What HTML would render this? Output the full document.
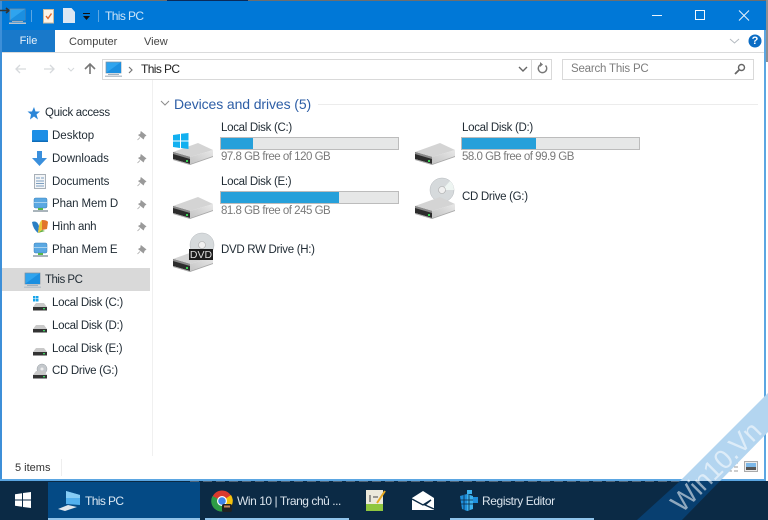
<!DOCTYPE html>
<html><head><meta charset="utf-8">
<style>
html,body{margin:0;padding:0;background:#fff}
#r{position:relative;width:768px;height:520px;overflow:hidden;background:#fff;font-family:"Liberation Sans",sans-serif;font-size:12px;color:#222}
.a{position:absolute;white-space:nowrap}
.t{position:absolute;white-space:nowrap;font-size:11.5px;letter-spacing:-.3px;line-height:14px;color:#1f2a33}
.g{color:#7a7a7a;letter-spacing:-.5px}
.bar{position:absolute;width:177px;height:11px;background:#e6e7e7;border:1px solid #bcbcbc;box-sizing:content-box}
.bar i{display:block;height:11px;background:#26a0da}
svg{position:absolute;overflow:visible}
</style></head><body><div id="r">
<svg width="0" height="0"><defs>
<linearGradient id="rs" x1="0" y1="1" x2="1" y2="0"><stop offset="0" stop-color="#c4c4c4"/><stop offset="1" stop-color="#e8e8e8"/></linearGradient>
<g id="hdd"><path d="M1 10 L26 1 L41 8 L18 15 Z" fill="#d4d4d4"/><path d="M1 10 L18 15 L18 22 L1 17 Z" fill="#2c2c2c"/><path d="M1 10 L18 15 L18 17 L1 12 Z" fill="#8a8a8a"/><path d="M18 15 L41 8 L41 14 L18 22 Z" fill="url(#rs)"/><path d="M1 17 L18 22 L41 14 V15 L18 23 L1 18 Z" fill="#a8a8a8"/><rect x="14" y="18" width="2" height="2" fill="#39d353"/></g>
<g id="shdd"><path d="M1 6 L4 2 H12 L15 6 Z" fill="#c9c9c9"/><rect x="1" y="6" width="14" height="3.5" fill="#333"/><rect x="11" y="7" width="2" height="1.3" fill="#3fd060"/></g>
<g id="pc"><rect x="1" y="1" width="15" height="11" fill="#2fa4ee" stroke="#7f8f9f" stroke-width=".7"/><path d="M1 12 L16 1 V12Z" fill="#1b8fe0"/><rect x="3" y="13" width="11" height="1" fill="#9fb0bf"/><rect x="0" y="14.5" width="17" height="1.5" fill="#b9c3cc"/></g>
<g id="nd"><rect x="1" y="1" width="13" height="10" rx="1.5" fill="#5aa8e2" stroke="#3d80b8" stroke-width=".5"/><rect x="1" y="5" width="13" height="1" fill="#a8d2f0"/><rect x="5" y="11" width="5" height="2" fill="#58b848"/><rect x="0" y="13" width="15" height="2" fill="#a9b4bb"/></g>
<g id="pin"><path d="M4 0.5 L9 4.5 L7.5 5.5 L6.5 8 L1.5 4 L3.5 3 Z M3 6.5 L0.5 9" fill="#9a9a9a" stroke="#9a9a9a" stroke-width=".6"/></g>
</defs></svg>

<!-- title bar -->
<div class="a" style="left:0;top:0;width:768px;height:1px;background:#6e6e6e"></div>
<div class="a" style="left:167px;top:0;width:81px;height:1px;background:#0a2a5a"></div>
<div class="a" style="left:0;top:1px;width:766px;height:29px;background:#0078d7"></div>
<div class="a" style="left:766px;top:0;width:2px;height:482px;background:#fff"></div>
<div class="a" style="left:766px;top:0;width:2px;height:62px;background:#8a8f94"></div>
<div class="a" style="left:0;top:1px;width:2px;height:480px;background:#3d8fd8"></div>
<div class="a" style="left:764px;top:30px;width:2px;height:451px;background:#5ba6e2"></div>
<svg style="left:0;top:5px" width="12" height="12"><path d="M0 5.5 H8 M6 3 L9 5.5 L6 8" stroke="#333" stroke-width="1.6" fill="none"/></svg>
<svg style="left:9px;top:8px" width="17" height="16"><use href="#pc"/></svg>
<div class="a" style="left:31px;top:10px;width:1px;height:12px;background:#5da7e2"></div>
<svg style="left:43px;top:9px" width="12" height="15"><rect x=".5" y=".5" width="10" height="13.5" fill="#fbf3e6" stroke="#cdbb9f"/><path d="M3 7 L5 9.5 L8.5 4.5" stroke="#e2672a" stroke-width="1.4" fill="none"/></svg>
<svg style="left:63px;top:8px" width="13" height="16"><path d="M0 0 H8.5 L12 4 V15 H0Z" fill="#dce7f3"/></svg>
<svg style="left:82px;top:13px" width="9" height="8"><rect x="1" y="0" width="7" height="1" fill="#111"/><path d="M1 3 H8 L4.5 7Z" fill="#111"/></svg>
<div class="a" style="left:98px;top:10px;width:1px;height:12px;background:#5da7e2"></div>
<div class="a" style="left:105px;top:9px;font-size:12px;letter-spacing:-.6px;line-height:15px;color:#cfe5f8">This PC</div>
<svg style="left:650px;top:8px" width="110" height="14"><path d="M2 7.5 H12" stroke="#e8f3fc" stroke-width="1"/><rect x="45.5" y="2.5" width="9" height="9" fill="none" stroke="#f2f8fd" stroke-width="1"/><path d="M89 2.5 L99 12.5 M99 2.5 L89 12.5" stroke="#e8f3fc" stroke-width="1"/></svg>

<!-- ribbon tabs -->
<div class="a" style="left:2px;top:30px;width:53px;height:22px;background:#1979ca;color:#e8f2fb;font-size:11px;line-height:22px;text-align:center">File</div>
<div class="a" style="left:69px;top:36px;font-size:11px;line-height:13px;color:#444">Computer</div>
<div class="a" style="left:144px;top:36px;font-size:11px;line-height:13px;color:#444">View</div>
<div class="a" style="left:2px;top:52px;width:762px;height:1px;background:#dadbdc"></div>
<svg style="left:729px;top:38px" width="12" height="8"><path d="M1 1 L5.5 5 L10 1" stroke="#b4bac0" fill="none"/></svg>
<svg style="left:748px;top:34px" width="14" height="14"><circle cx="7" cy="7" r="6.5" fill="#0a6cc4"/></svg>
<div class="a" style="left:748px;top:34px;width:14px;text-align:center;font-size:11px;line-height:14px;font-weight:bold;color:#fff">?</div>

<!-- nav -->
<svg style="left:14px;top:62px" width="90" height="14"><path d="M12 7 H2 M6 3 L2 7 L6 11" stroke="#d6d9dc" stroke-width="1.3" fill="none"/><path d="M30 7 H40 M36 3 L40 7 L36 11" stroke="#d6d9dc" stroke-width="1.3" fill="none"/><path d="M54 6 L57 9 L60 6" stroke="#d6d9dc" fill="none"/><path d="M76 12 V3 M71 7 L76 2 L81 7" stroke="#777" stroke-width="1.6" fill="none"/></svg>
<div class="a" style="left:102px;top:59px;width:428px;height:19px;border:1px solid #d9d9d9;box-sizing:content-box"></div>
<div class="a" style="left:531px;top:59px;width:19px;height:19px;border:1px solid #d9d9d9;border-left:1px solid #d9d9d9"></div>
<svg style="left:105px;top:61px" width="17" height="16"><use href="#pc"/></svg>
<svg style="left:128px;top:66px" width="6" height="8"><path d="M1 1 L4 4 L1 7" stroke="#777" stroke-width="1.2" fill="none"/></svg>
<div class="a" style="left:141px;top:62px;font-size:12px;letter-spacing:-.6px;line-height:14px;color:#222">This PC</div>
<svg style="left:518px;top:66px" width="10" height="7"><path d="M1 1 L5 5 L9 1" stroke="#666" stroke-width="1.4" fill="none"/></svg>
<svg style="left:536px;top:62px" width="12" height="13"><path d="M9.5 3.5 A4.2 4.2 0 1 1 5 2.5" stroke="#777" stroke-width="1.4" fill="none"/><path d="M4 0 L7 2.5 L4 5Z" fill="#777"/></svg>
<div class="a" style="left:562px;top:59px;width:190px;height:19px;border:1px solid #d9d9d9"></div>
<div class="a" style="left:571px;top:62px;font-size:11.5px;letter-spacing:-.2px;line-height:14px;color:#7d7d7d">Search This PC</div>
<svg style="left:734px;top:63px" width="12" height="12"><circle cx="7.5" cy="4.5" r="3" fill="none" stroke="#666" stroke-width="1.4"/><path d="M5 7 L1 11" stroke="#666" stroke-width="1.8"/></svg>

<!-- sidebar -->
<div class="a" style="left:152px;top:80px;width:1px;height:376px;background:#f0f0f0"></div>
<svg style="left:26px;top:107px" width="14" height="13"><path d="M8 0 L9.5 4.5 L14 4.5 L10.5 7.5 L12 12.5 L8 9.5 L4 12.5 L5 7.5 L1.5 4.5 L6 4.5Z" fill="#2b86d8"/></svg>
<div class="t" style="left:45px;top:106px">Quick access</div>
<svg style="left:32px;top:130px" width="16" height="12"><rect width="16" height="12" rx="1" fill="#1d8fe6"/><rect x="0" y="10.5" width="16" height="1.5" fill="#0f6cb8"/></svg>
<div class="t" style="left:52px;top:129px;letter-spacing:0">Desktop</div>
<svg style="left:32px;top:151px" width="16" height="15"><path d="M5 0 H10 V7 H15 L7.5 15 L0 7 H5Z" fill="#3a8fdc"/></svg>
<div class="t" style="left:52px;top:152px;letter-spacing:0">Downloads</div>
<svg style="left:34px;top:174px" width="12" height="15"><rect x=".5" y=".5" width="11" height="14" fill="#f3f5f7" stroke="#a8b0b8"/><path d="M2 4 H6 M7 4 H10 M2 7 H10 M2 9.5 H10 M2 12 H10" stroke="#7d9fc0"/></svg>
<div class="t" style="left:52px;top:175px;letter-spacing:-.1px">Documents</div>
<svg style="left:33px;top:197px" width="15" height="15"><use href="#nd"/></svg>
<div class="t" style="left:52px;top:197px;letter-spacing:-.1px">Phan Mem D</div>
<svg style="left:32px;top:219px" width="16" height="15"><path d="M0 3 Q5 1 7 7 L6 14 Q1 10 0 3Z" fill="#2a7fc4"/><path d="M7 7 Q8 2 10 1 L10 11 L6 14Z" fill="#e8c63a"/><path d="M10 1 Q15 1 16 3 L15 10 L10 11Z" fill="#e2742a"/><path d="M6 14 L10 11 L13 12Z" fill="#5fae3e"/></svg>
<div class="t" style="left:52px;top:220px">Hình anh</div>
<svg style="left:33px;top:242px" width="15" height="15"><use href="#nd"/></svg>
<div class="t" style="left:52px;top:243px;letter-spacing:-.1px">Phan Mem E</div>
<svg style="left:137px;top:131px" width="10" height="10"><use href="#pin"/></svg>
<svg style="left:137px;top:154px" width="10" height="10"><use href="#pin"/></svg>
<svg style="left:137px;top:177px" width="10" height="10"><use href="#pin"/></svg>
<svg style="left:137px;top:200px" width="10" height="10"><use href="#pin"/></svg>
<svg style="left:137px;top:222px" width="10" height="10"><use href="#pin"/></svg>
<svg style="left:137px;top:245px" width="10" height="10"><use href="#pin"/></svg>

<div class="a" style="left:2px;top:268px;width:148px;height:23px;background:#d9d9d9"></div>
<svg style="left:24px;top:272px" width="17" height="16"><use href="#pc"/></svg>
<div class="t" style="left:45px;top:273px;letter-spacing:-.5px">This PC</div>
<svg style="left:32px;top:296px" width="16" height="14"><g transform="translate(0,5)"><use href="#shdd"/></g><path d="M1 0 H3.5 V2.5 H1Z M4 0 H6.5 V2.5 H4Z M1 3 H3.5 V5.5 H1Z M4 3 H6.5 V5.5 H4Z" fill="#18a4ea"/></svg>
<div class="t" style="left:52px;top:296px">Local Disk (C:)</div>
<svg style="left:32px;top:319px" width="16" height="14"><g transform="translate(0,4)"><use href="#shdd"/></g></svg>
<div class="t" style="left:52px;top:319px">Local Disk (D:)</div>
<svg style="left:32px;top:342px" width="16" height="14"><g transform="translate(0,4)"><use href="#shdd"/></g></svg>
<div class="t" style="left:52px;top:342px">Local Disk (E:)</div>
<svg style="left:32px;top:363px" width="16" height="16"><circle cx="10" cy="6" r="5" fill="#c4c8cc" stroke="#9aa0a6" stroke-width=".5"/><circle cx="10" cy="6" r="1.5" fill="#eee"/><g transform="translate(0,6)"><use href="#shdd"/></g></svg>
<div class="t" style="left:52px;top:364px">CD Drive (G:)</div>

<!-- content -->
<svg style="left:160px;top:100px" width="11" height="8"><path d="M1 1 L5 5 L9 1" stroke="#8d8d8d" fill="none"/></svg>
<div class="a" style="left:174px;top:96px;font-size:14px;letter-spacing:-.1px;line-height:17px;color:#2d5ea6">Devices and drives (5)</div>
<div class="a" style="left:318px;top:104px;width:440px;height:1px;background:#ececec"></div>

<svg style="left:172px;top:142px" width="42" height="24"><use href="#hdd"/></svg>
<svg style="left:173px;top:133px" width="16" height="16"><path d="M0 2 L7 1 V7.5 H0Z M8 .8 L15.5 0 V7.5 H8Z M0 8.5 H7 V15 L0 14Z M8 8.5 H15.5 V16 L8 15Z" fill="#12b0f0"/></svg>
<div class="t" style="left:221px;top:121px">Local Disk (C:)</div>
<div class="bar" style="left:220px;top:137px"><i style="width:32px"></i></div>
<div class="t g" style="left:221px;top:150px">97.8 GB free of 120 GB</div>

<svg style="left:414px;top:142px" width="42" height="24"><use href="#hdd"/></svg>
<div class="t" style="left:462px;top:121px">Local Disk (D:)</div>
<div class="bar" style="left:461px;top:137px"><i style="width:74px"></i></div>
<div class="t g" style="left:462px;top:150px">58.0 GB free of 99.9 GB</div>

<svg style="left:172px;top:196px" width="42" height="24"><use href="#hdd"/></svg>
<div class="t" style="left:221px;top:175px">Local Disk (E:)</div>
<div class="bar" style="left:220px;top:191px"><i style="width:118px"></i></div>
<div class="t g" style="left:221px;top:204px">81.8 GB free of 245 GB</div>

<svg style="left:414px;top:178px" width="45" height="40"><circle cx="28" cy="12" r="12" fill="#d6dadc" stroke="#b4b8bc" stroke-width=".5"/><path d="M28 12 L36 3 A12 12 0 0 1 40 12Z" fill="#eef5f2"/><circle cx="28" cy="12" r="3.5" fill="#f0f0f0" stroke="#aaa" stroke-width=".6"/><g transform="translate(0,18)"><use href="#hdd"/></g></svg>
<div class="t" style="left:462px;top:190px">CD Drive (G:)</div>

<svg style="left:172px;top:233px" width="45" height="40"><circle cx="30" cy="12" r="12" fill="#d6dadc" stroke="#b4b8bc" stroke-width=".5"/><circle cx="30" cy="12" r="3.5" fill="#f0f0f0" stroke="#aaa" stroke-width=".6"/><g transform="translate(0,16)"><use href="#hdd"/></g><rect x="17" y="16" width="24" height="11" fill="#1c1c1c"/></svg>
<div class="a" style="left:189px;top:249px;width:24px;text-align:center;font-size:10.5px;line-height:12px;color:#ddd">DVD</div>
<div class="t" style="left:221px;top:243px">DVD RW Drive (H:)</div>

<!-- status -->
<div class="a" style="left:15px;top:461px;font-size:11px;line-height:14px;color:#333">5 items</div>
<div class="a" style="left:61px;top:459px;width:1px;height:17px;background:#eee"></div>
<svg style="left:722px;top:461px" width="40" height="13"><rect x=".5" y=".5" width="3.5" height="3" fill="#cfe0ef" stroke="#8fa8be" stroke-width=".5"/><rect x=".5" y="4.5" width="3.5" height="3" fill="#cfe0ef" stroke="#8fa8be" stroke-width=".5"/><rect x=".5" y="8.5" width="3.5" height="3" fill="#cfe0ef" stroke="#8fa8be" stroke-width=".5"/><path d="M6 2 H10 M12 2 H16 M6 6 H10 M12 6 H16 M6 10 H10 M12 10 H16" stroke="#9b9b9b"/><rect x="22.5" y=".5" width="13" height="10" fill="#ececec" stroke="#aaa"/><rect x="24" y="2" width="10" height="7" fill="#7db8e8"/><rect x="24" y="6" width="10" height="3" fill="#555"/></svg>
<div class="a" style="left:0;top:479px;width:766px;height:2px;background:#5ba6e2"></div>

<!-- strip behind -->
<div class="a" style="left:0;top:481px;width:768px;height:39px;background:#0b2a45"></div>
<div class="a" style="left:190px;top:481px;width:530px;height:1px;background:repeating-linear-gradient(90deg,#4f6478 0 9px,#0b2a45 9px 13px)"></div>

<!-- taskbar -->
<svg style="left:15px;top:492px" width="16" height="16"><path d="M0 2.2 L7 1.2 V7.5 H0Z M8 1 L16 0 V7.5 H8Z M0 8.5 H7 V14.8 L0 13.8Z M8 8.5 H16 V16 L8 15Z" fill="#fff"/></svg>
<div class="a" style="left:48px;top:482px;width:152px;height:38px;background:#044a85"></div>
<div class="a" style="left:48px;top:518px;width:152px;height:2px;background:#8fc3ea"></div>
<svg style="left:58px;top:490px" width="24" height="22"><path d="M8 1 L22 5 V15 L8 14Z" fill="#52b0ee"/><path d="M8 1 L22 5 V8 L8 8Z" fill="#86ccf5"/><path d="M0 19 L10 15 L19 17 L7 21 Z" fill="#dfe6ec"/></svg>
<div class="a" style="left:85px;top:494px;font-size:12px;letter-spacing:-.6px;line-height:14px;color:#dbe8f3">This PC</div>

<svg style="left:211px;top:490px" width="23" height="23"><circle cx="11" cy="11" r="10.5" fill="#d93a2e"/><path d="M11 11 L20 5 A10.5 10.5 0 0 1 14 21Z" fill="#f4c20d"/><path d="M11 11 L14 21 A10.5 10.5 0 0 1 1.5 6Z" fill="#2d9c46"/><circle cx="11" cy="11" r="5" fill="#fff"/><circle cx="11" cy="11" r="3.8" fill="#3f85ed"/><rect x="11" y="14" width="10" height="8" rx="2" fill="#222"/><rect x="13" y="15.5" width="6" height="2" fill="#c9885c"/></svg>
<div class="a" style="left:237px;top:494px;font-size:12px;letter-spacing:-.45px;line-height:14px;color:#d9e3ec">Win 10 | Trang chủ ...</div>
<div class="a" style="left:205px;top:518px;width:144px;height:2px;background:#8fc3ea"></div>

<svg style="left:365px;top:489px" width="22" height="24"><rect x="1" y="1" width="17" height="21" fill="#ece9dc"/><rect x="1" y="15" width="17" height="7" fill="#8fc63f"/><path d="M5 6 V13 M8 8 H13" stroke="#666" stroke-width="1.3"/><path d="M12 14 L20 2" stroke="#e6a820" stroke-width="2"/></svg>
<svg style="left:411px;top:491px" width="24" height="20"><path d="M1 7 L12 0 L23 7 L23 19 H1Z" fill="#fff"/><path d="M1 8 L12 14 L20 9 L14 14 L23 18" stroke="#0b2a45" stroke-width="1.4" fill="none"/></svg>
<svg style="left:459px;top:489px" width="20" height="23"><path d="M1 7 L8 5 L8 22 L3 20Z" fill="#1f8fdb"/><path d="M8 5 L14 7 L14 20 L8 22Z" fill="#3db2ee"/><path d="M14 8 H19 V14 H14Z" fill="#1f8fdb"/><path d="M8 1 H13 V5 H8Z" fill="#3db2ee"/><path d="M1 11 H14 M1 15 H14 M5 6 V21 M10 6 V21" stroke="#0b2a45" stroke-width=".8"/></svg>
<div class="a" style="left:482px;top:494px;font-size:12px;letter-spacing:-.4px;line-height:14px;color:#d9e3ec">Registry Editor</div>
<div class="a" style="left:450px;top:518px;width:144px;height:2px;background:#8fc3ea"></div>

<!-- watermark -->
<svg style="left:0;top:0" width="768" height="520"><polygon points="768,393 680,481 720,481 768,432" fill="#b3d5f0"/><polygon points="680,481 637,520 682,520 720,481" fill="#083f70"/></svg>
<div class="a" style="left:656px;top:452px;width:120px;text-align:center;font-size:27px;letter-spacing:-.3px;line-height:30px;color:rgba(255,255,255,.55);transform:rotate(-45deg)">Win10.Vn</div>
</div></body></html>
